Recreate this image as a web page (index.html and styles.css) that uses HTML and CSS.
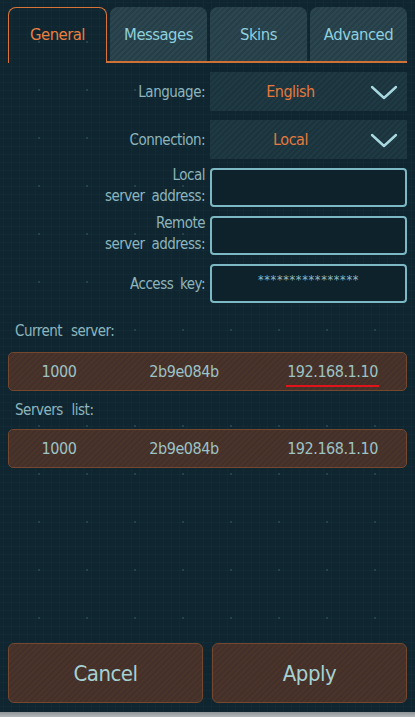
FILE: index.html
```html
<!DOCTYPE html>
<html>
<head>
<meta charset="utf-8">
<link rel="stylesheet" href="styles.css">
</head>
<body>
<div class="screen">
  <div class="tabs">
    <div class="tab active">General</div>
    <div class="tab-group">
      <div class="tab">Messages</div>
      <div class="tab">Skins</div>
      <div class="tab">Advanced</div>
    </div>
  </div>

  <div class="form">
    <div class="label">Language:</div>
    <div class="select"><span class="value">English</span>
      <svg class="chev" viewBox="0 0 28 15" width="28" height="15"><polyline points="2,2 14,13 26,2" fill="none" stroke="#a9d8e0" stroke-width="2.4" stroke-linecap="round" stroke-linejoin="round"/></svg>
    </div>

    <div class="label">Connection:</div>
    <div class="select"><span class="value">Local</span>
      <svg class="chev" viewBox="0 0 28 15" width="28" height="15"><polyline points="2,2 14,13 26,2" fill="none" stroke="#a9d8e0" stroke-width="2.4" stroke-linecap="round" stroke-linejoin="round"/></svg>
    </div>

    <div class="label two">Local<br>server address:</div>
    <div class="input"></div>

    <div class="label two">Remote<br>server address:</div>
    <div class="input"></div>

    <div class="label">Access key:</div>
    <div class="input key">****************</div>
  </div>

  <div class="section-title first">Current server:</div>
  <div class="server-row">
    <span>1000</span><span>2b9e084b</span><span><span class="ip-marked">192.168.1.10</span></span>
  </div>

  <div class="section-title">Servers list:</div>
  <div class="server-row">
    <span>1000</span><span>2b9e084b</span><span>192.168.1.10</span>
  </div>

  <div class="spacer"></div>

  <div class="buttons">
    <div class="btn">Cancel</div>
    <div class="btn">Apply</div>
  </div>
</div>
<div class="bottom-bar"></div>
</body>
</html>
```

FILE: styles.css
```css
* { box-sizing: border-box; }

html, body {
  margin: 0;
  padding: 0;
  width: 415px;
  height: 717px;
  background: #0f2630;
  overflow: hidden;
  font-family: "DejaVu Sans Condensed", "DejaVu Sans", sans-serif;
}

.screen {
  width: 415px;
  height: 712px;
  padding: 7px 8px 9px 8px;
  display: flex;
  flex-direction: column;
  background-color: #0f2630;
  background-image:
    radial-gradient(circle at center, rgba(120, 170, 180, 0.35) 0, rgba(120, 170, 180, 0.0) 1.6px),
    linear-gradient(to right, rgba(90, 140, 150, 0.045) 1px, transparent 1px),
    linear-gradient(to bottom, rgba(90, 140, 150, 0.045) 1px, transparent 1px);
  background-size: 48px 48px, 8px 8px, 8px 8px;
  background-position: 15px 18px, 3px 2px, 3px 2px;
}

/* Tabs */
.tabs {
  display: flex;
  height: 56px;
  flex-shrink: 0;
}

.tab {
  display: flex;
  align-items: center;
  justify-content: center;
  font-size: 16.5px;
  letter-spacing: -0.5px;
  color: #8fd0de;
  border-radius: 8px 8px 0 0;
}

.tab.active {
  width: 99px;
  color: #e9803f;
  border: 1.5px solid #d8743a;
  border-bottom: none;
  padding-bottom: 2px;
}

.tab-group {
  flex: 1;
  display: flex;
  gap: 3px;
  padding-left: 3px;
  border-bottom: 2px solid #d07236;
}

.tab-group .tab {
  flex: 1;
  background: repeating-linear-gradient(135deg, #2b464f 0 2px, #253e47 2px 4px);
}

/* Form */
.form {
  margin-top: 9px;
  display: grid;
  grid-template-columns: 197px 197px;
  column-gap: 5px;
  row-gap: 9px;
  grid-auto-rows: 39px;
}

.label {
  color: #8db5bd;
  font-size: 15px;
  letter-spacing: -0.5px;
  text-align: right;
  word-spacing: 3px;
  align-self: center;
}

.label.two {
  line-height: 21px;
  margin-top: -4px;
}

.select {
  position: relative;
  display: flex;
  align-items: center;
  justify-content: center;
  background: repeating-linear-gradient(135deg, #1f3a43 0 2px, #1a333c 2px 4px);
}

.select .value {
  color: #e5793d;
  font-size: 16px;
  letter-spacing: -0.5px;
  margin-left: -36px;
}

.chev {
  position: absolute;
  right: 9px;
  top: 13px;
}

.input {
  border: 2px solid #7cb9c4;
  border-radius: 4px;
  background: #0d222b;
}

.input.key {
  color: #8dbac2;
  font-size: 12.5px;
  text-align: center;
  padding-top: 6px;
  letter-spacing: 0.7px;
}

/* Server sections */
.section-title {
  color: #8db5bd;
  font-size: 15px;
  letter-spacing: -0.5px;
  word-spacing: 5px;
  padding-left: 7px;
  height: 18px;
  line-height: 18px;
  margin-top: 10px;
  margin-bottom: 10px;
}

.section-title.first {
  margin-top: 19px;
  margin-bottom: 12px;
}

.server-row {
  height: 39px;
  display: grid;
  grid-template-columns: 100px 150px 1fr;
  align-items: center;
  text-align: center;
  color: #9cc3c6;
  font-size: 16px;
  letter-spacing: -0.45px;
  background: repeating-linear-gradient(135deg, #4a3328 0 2px, #43302a 2px 4px);
  border: 1.5px solid #74472f;
  border-radius: 5px;
}

.ip-marked {
  display: inline-block;
  padding: 0 1px 4px;
  margin-bottom: -6px;
  border-bottom: 2.5px solid #e0141a;
}

.spacer { flex: 1; }

.buttons {
  display: flex;
  gap: 9px;
  height: 60px;
  flex-shrink: 0;
}

.btn {
  flex: 1;
  display: flex;
  align-items: center;
  justify-content: center;
  font-size: 22px;
  letter-spacing: -0.5px;
  color: #a5d1d3;
  background: repeating-linear-gradient(135deg, #4a3328 0 2px, #43302a 2px 4px);
  border: 1.5px solid #74472f;
  border-radius: 6px;
}

.bottom-bar {
  height: 5px;
  background: linear-gradient(to bottom, #8e9497, #b4b8ba);
}
```
